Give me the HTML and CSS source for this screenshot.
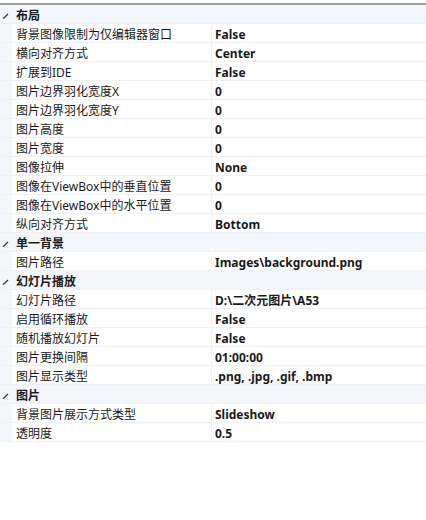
FILE: index.html
```html
<!DOCTYPE html>
<html>
<head>
<meta charset="utf-8">
<link rel="stylesheet" href="styles.css">
</head>
<body>
<div class="grid">
  <div class="cat"><svg class="chev" width="12" height="18" viewBox="0 0 12 18"><path d="M3 13.5 L4.5 12.5 L8 9" fill="none" stroke="#333" stroke-width="1.3"/></svg><span>布局</span></div>
  <div class="row"><div class="name">背景图像限制为仅编辑器窗口</div><div class="value">False</div></div>
  <div class="row"><div class="name">横向对齐方式</div><div class="value">Center</div></div>
  <div class="row"><div class="name">扩展到IDE</div><div class="value">False</div></div>
  <div class="row"><div class="name">图片边界羽化宽度X</div><div class="value">0</div></div>
  <div class="row"><div class="name">图片边界羽化宽度Y</div><div class="value">0</div></div>
  <div class="row"><div class="name">图片高度</div><div class="value">0</div></div>
  <div class="row"><div class="name">图片宽度</div><div class="value">0</div></div>
  <div class="row"><div class="name">图像拉伸</div><div class="value">None</div></div>
  <div class="row"><div class="name">图像在ViewBox中的垂直位置</div><div class="value">0</div></div>
  <div class="row"><div class="name">图像在ViewBox中的水平位置</div><div class="value">0</div></div>
  <div class="row"><div class="name">纵向对齐方式</div><div class="value">Bottom</div></div>
  <div class="cat"><svg class="chev" width="12" height="18" viewBox="0 0 12 18"><path d="M3 13.5 L4.5 12.5 L8 9" fill="none" stroke="#333" stroke-width="1.3"/></svg><span>单一背景</span></div>
  <div class="row"><div class="name">图片路径</div><div class="value">Images\background.png</div></div>
  <div class="cat"><svg class="chev" width="12" height="18" viewBox="0 0 12 18"><path d="M3 13.5 L4.5 12.5 L8 9" fill="none" stroke="#333" stroke-width="1.3"/></svg><span>幻灯片播放</span></div>
  <div class="row"><div class="name">幻灯片路径</div><div class="value">D:\二次元图片\A53</div></div>
  <div class="row"><div class="name">启用循环播放</div><div class="value">False</div></div>
  <div class="row"><div class="name">随机播放幻灯片</div><div class="value">False</div></div>
  <div class="row"><div class="name">图片更换间隔</div><div class="value">01:00:00</div></div>
  <div class="row"><div class="name">图片显示类型</div><div class="value">.png, .jpg, .gif, .bmp</div></div>
  <div class="cat"><svg class="chev" width="12" height="18" viewBox="0 0 12 18"><path d="M3 13.5 L4.5 12.5 L8 9" fill="none" stroke="#333" stroke-width="1.3"/></svg><span>图片</span></div>
  <div class="row"><div class="name">背景图片展示方式类型</div><div class="value">Slideshow</div></div>
  <div class="row"><div class="name">透明度</div><div class="value">0.5</div></div>
</div>
</body>
</html>
```
FILE: styles.css
```css
html, body {
  margin: 0;
  padding: 0;
  background: #ffffff;
}
body {
  font-family: "Noto Sans", "Noto Sans CJK SC", sans-serif;
  font-size: 12px;
  color: #1a1a1a;
}
.grid {
  margin-top: 3px;
  border-top: 2px solid #a3a3a3;
}
.cat {
  height: 18px;
  border-bottom: 1px solid #eef2f7;
  background: #f3f6fa;
  display: flex;
  font-weight: bold;
  line-height: 18px;
}
.chev {
  width: 12px;
  height: 18px;
  flex: none;
}
.cat span {
  padding-left: 4px;
  padding-top: 2px;
}
.row {
  height: 18px;
  display: flex;
  background: #f3f6fa;
  border-bottom: 1px solid #eef2f7;
  line-height: 18px;
}
.name {
  margin-left: 12px;
  width: 195px;
  padding-left: 4px;
  padding-top: 2px;
  background: #ffffff;
  border-right: 1px solid #eef2f7;
  white-space: nowrap;
  overflow: hidden;
}
.value {
  flex: 1;
  padding-left: 3px;
  padding-top: 2px;
  background: #ffffff;
  font-weight: bold;
  white-space: nowrap;
  overflow: hidden;
}
```
